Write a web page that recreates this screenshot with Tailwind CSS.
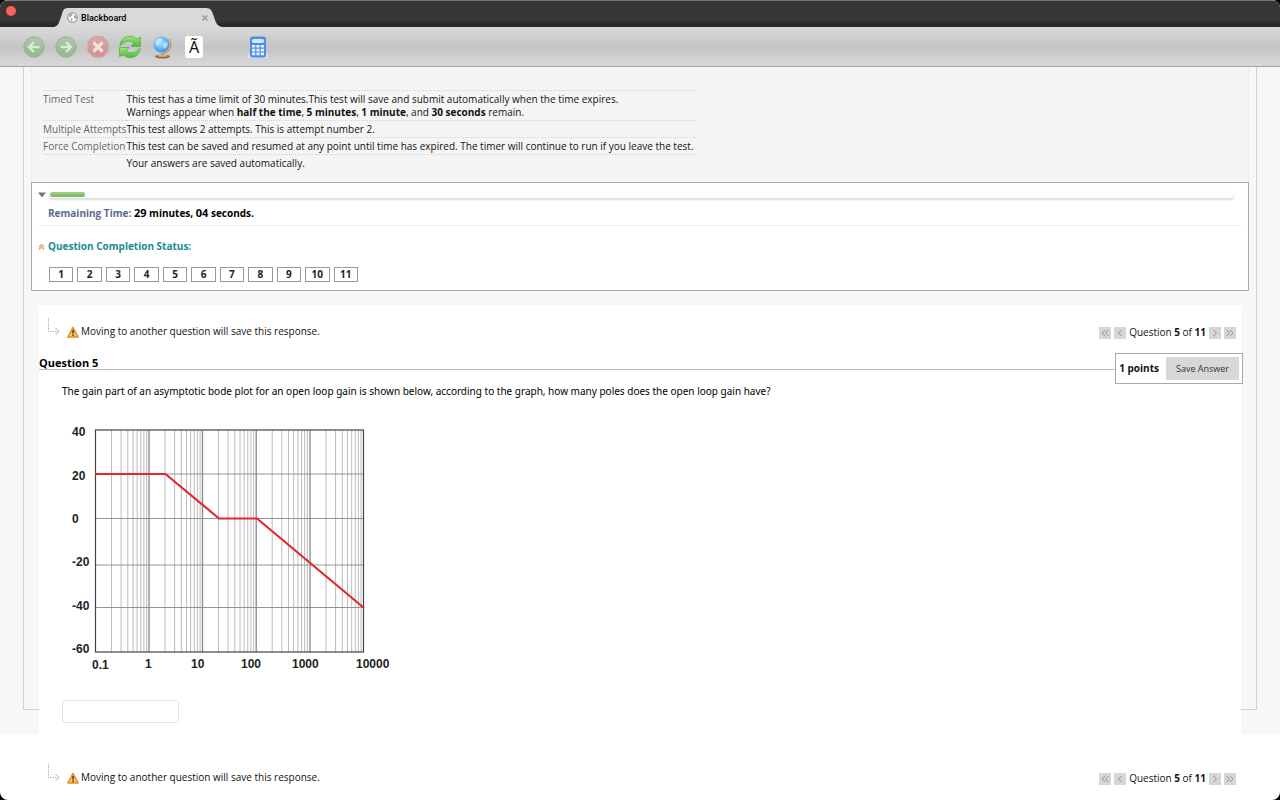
<!DOCTYPE html>
<html lang="en">
<head>
<meta charset="utf-8">
<meta name="viewport" content="width=device-width, initial-scale=1">
<title>Blackboard</title>
<script src="https://cdn.jsdelivr.net/npm/@tailwindcss/browser@4"></script>
</head>
<body class="bg-black font-['Open_Sans','Noto_Sans',sans-serif] text-[10px] leading-[13px] text-[#111]">
<svg class="absolute size-0" aria-hidden="true">
  <defs>
    <linearGradient id="gGreen" x1="0" y1="0" x2="0" y2="1"><stop offset="0" stop-color="#a9c7a3"/><stop offset="1" stop-color="#82b679"/></linearGradient>
    <linearGradient id="gRed" x1="0" y1="0" x2="0" y2="1"><stop offset="0" stop-color="#dda09f"/><stop offset="1" stop-color="#dc7f7f"/></linearGradient>
    <linearGradient id="gLeaf" x1="0" y1="0" x2="0" y2="1"><stop offset="0" stop-color="#9be878"/><stop offset="1" stop-color="#4fb83a"/></linearGradient>
    <linearGradient id="gWarn" x1="0" y1="0" x2="0" y2="1"><stop offset="0" stop-color="#f8a53c"/><stop offset="1" stop-color="#fbd061"/></linearGradient>
    <radialGradient id="gGlobe" cx=".4" cy=".35" r=".7"><stop offset="0" stop-color="#bfe4ff"/><stop offset=".6" stop-color="#62b2f5"/><stop offset="1" stop-color="#3a8de0"/></radialGradient>
  </defs>
  <symbol id="branch" viewBox="0 0 13 18"><path d="M1.500 0V13.500H11" fill="none" stroke="#b5b5b5" stroke-dasharray="1.500 1"/><path d="M8.500 10l3.500 3.500-3.500 3.500" fill="none" stroke="#b5b5b5"/></symbol>
  <symbol id="warn" viewBox="0 0 12 12"><path d="M6 1.200L11.200 11H.8z" fill="url(#gWarn)" stroke="#e58a2e" stroke-width="1.300" stroke-linejoin="round"/><path d="M6 4v3.600M6 8.600v1.400" stroke="#333" stroke-width="1.400"/></symbol>
</svg>
<div class="flex min-h-screen flex-col overflow-hidden rounded-[8px] bg-white">
  <header>
    <div class="flex h-[27px] items-end border-t border-[#777] bg-linear-to-b from-[#373535] from-75% to-[#2a2828] to-90%">
      <div class="flex h-full w-[54px] shrink-0 items-start pt-[5px] pl-[6px]">
        <button type="button" aria-label="Close window" class="size-[10px] rounded-full bg-[#f9605a]"></button>
      </div>
      <div class="relative h-[19px] w-[168px] shrink-0">
        <svg class="absolute inset-0" width="168" height="19" viewBox="0 0 168 19" aria-hidden="true"><path d="M0 19C4 18 5 15 7 9C9 3 9 0 14 0H152C157 0 158 3 160 9C162 15 163 18 168 19z" fill="#d9d9d9"/></svg>
        <div class="relative flex h-full items-center gap-[3px] pr-[13px] pl-[13px]">
          <svg width="11" height="11" viewBox="0 0 11 11" aria-hidden="true"><circle cx="5.500" cy="5.500" r="4.800" fill="#fff" stroke="#777" stroke-width=".9"/><path d="M2.500 2.500l2.500-.8 1 1-1.600 1.100-.6 1.200-1.400.4zM3.500 6l2 .8-.4 2.200-1-.6zM7 3l2 .8.500 2-1.500 1.500-.8-2z" fill="#999"/></svg>
          <span class="flex-1 pt-px font-['Roboto',sans-serif] text-[9px] font-medium text-black">Blackboard</span>
          <button type="button" aria-label="Close tab" class="size-[8px]"><svg width="8" height="8" viewBox="0 0 8 8"><path d="M1.500 1.500l5 5M6.500 1.500l-5 5" stroke="#9c9c9c" stroke-width="1.500"/></svg></button>
        </div>
      </div>
    </div>
    <nav class="flex h-[40px] items-center gap-[8px] border-b border-[#a3a3a3] bg-linear-to-b from-[#dadada] via-[#c5c5c5] to-[#d8d8d8] pl-[22px]" aria-label="Toolbar">
      <button type="button" aria-label="Back" class="opacity-80"><svg width="24" height="24" viewBox="0 0 24 24"><circle cx="12" cy="12" r="10.200" fill="url(#gGreen)" stroke="#8fac8a"/><path d="M17.500 12H7.500M12 7l-5 5 5 5" fill="none" stroke="#e6ece4" stroke-width="2.400"/></svg></button>
      <button type="button" aria-label="Forward" class="opacity-80"><svg width="24" height="24" viewBox="0 0 24 24"><circle cx="12" cy="12" r="10.200" fill="url(#gGreen)" stroke="#8fac8a"/><path d="M6.500 12h10M12 7l5 5-5 5" fill="none" stroke="#e6ece4" stroke-width="2.400"/></svg></button>
      <button type="button" aria-label="Stop" class="opacity-80"><svg width="24" height="24" viewBox="0 0 24 24"><path d="M7.500 1.500h9l5.500 5.500v9.500l-5.500 5.500h-9L2 16.500V7z" fill="url(#gRed)" stroke="#c99" stroke-linejoin="round"/><path d="M7.500 7.500l9 9M16.500 7.500l-9 9" stroke="#f4eded" stroke-width="3.200"/></svg></button>
      <button type="button" aria-label="Reload"><svg width="24" height="24" viewBox="0 0 24 24"><path d="M2 11C2 4 8 .8 13 1.500c2.500.3 4 1.300 5.200 2.600L22.500 2.500V11.500H13l3-3.500C12 4.500 6 6 2 11z" fill="url(#gLeaf)" stroke="#5ab04a" stroke-width=".8"/><path d="M22 13c0 7-6 10.200-11 9.500-2.500-.3-4-1.300-5.200-2.600L1.500 21.500V12.500H11l-3 3.500c4 3.500 10 2 14-3z" fill="url(#gLeaf)" stroke="#5ab04a" stroke-width=".8"/></svg></button>
      <button type="button" aria-label="Open in browser"><svg width="24" height="24" viewBox="0 0 24 24"><ellipse cx="12.500" cy="21.500" rx="7.500" ry="2" fill="#9a6a3c"/><ellipse cx="12.500" cy="20.800" rx="5" ry="1" fill="#d8b384"/><path d="M19 4c4 6 1 14-7 14.500v2" fill="none" stroke="#c79a62" stroke-width="1.400"/><circle cx="11.500" cy="9.500" r="8" fill="url(#gGlobe)"/><path d="M6 5l4-2 2 2-3 3-1 3-3-2zM13 8l4-1 1 3-3 4-2-2z" fill="#d6efff" opacity=".65"/></svg></button>
      <button type="button" aria-label="Special characters" class="flex size-[24px] items-center justify-center"><span class="flex h-[22px] w-[18px] items-center justify-center rounded-[3px] bg-white font-['Noto_Sans',sans-serif] text-[16px] leading-[20px] text-[#111]">Ã</span></button>
      <button type="button" aria-label="Calculator" class="ml-[32px]"><svg width="24" height="24" viewBox="0 0 24 24"><rect x="2" y="19" width="20" height="4" rx="2" fill="#e6e6e6"/><rect x="4" y="1.500" width="16" height="21" rx="2.500" fill="#4a8fe7"/><rect x="6" y="4" width="12" height="4" rx="1.500" fill="#d9e7fb"/><path d="M6 10h3.200v2.600H6zM10.400 10h3.200v2.600h-3.200zM14.800 10H18v2.600h-3.200zM6 13.800h3.200v2.600H6zM10.400 13.800h3.200v2.600h-3.200zM14.800 13.800H18v2.600h-3.200zM6 17.600h3.200v2.600H6zM10.400 17.600h3.200v2.600h-3.200zM14.800 17.600H18v2.600h-3.200z" fill="#e9f1fd"/></svg></button>
    </nav>
  </header>

  <main class="bg-[#f7f7f7] px-[23px] pb-[24px]">
    <div class="border-x border-b border-[#d2d2d2] px-[7px]">
      <section class="border-x border-[#ebebeb] bg-[#f5f5f5] px-[11px] pt-[23px] pb-[11px]" aria-label="Test information">
        <table class="border-collapse text-left align-top">
          <tbody>
            <tr class="border-t border-dotted border-[#d4d4d4]"><th scope="row" class="w-[83px] pt-[2px] align-top font-normal whitespace-nowrap text-[#666]">Timed Test</th><td class="pt-[2px] pr-[2px] pb-[1px]">This test has a time limit of 30 minutes.This test will save and submit automatically when the time expires.<br>Warnings appear when <b>half the time</b>, <b>5 minutes</b>, <b>1 minute</b>, and <b>30 seconds</b> remain.</td></tr>
            <tr class="border-t border-dotted border-[#d4d4d4]"><th scope="row" class="pt-[2px] pb-[1px] font-normal whitespace-nowrap text-[#666]">Multiple Attempts</th><td class="pt-[2px] pb-[1px]">This test allows 2 attempts. This is attempt number 2.</td></tr>
            <tr class="border-t border-dotted border-[#d4d4d4]"><th scope="row" class="pt-[2px] pb-[1px] font-normal whitespace-nowrap text-[#666]">Force Completion</th><td class="pt-[2px] pr-[2px] pb-[1px]">This test can be saved and resumed at any point until time has expired. The timer will continue to run if you leave the test.</td></tr>
            <tr class="border-t border-dotted border-[#d4d4d4]"><td></td><td class="pt-[2px] pb-[1px]">Your answers are saved automatically.</td></tr>
          </tbody>
        </table>
      </section>

      <section class="border border-[#aaa] bg-white px-[6px] pb-[8px]" aria-label="Test status">
        <div class="flex items-center gap-[3px] pt-[8px] pr-[8px]">
          <button type="button" aria-label="Collapse timer"><svg width="8" height="6" viewBox="0 0 8 6"><path d="M0 .5h8L4 5.500z" fill="#777"/></svg></button>
          <div class="h-[7px] flex-1 rounded-full bg-[#fcfcfc] pt-px pl-px shadow-[0_2px_2px_#ddd]"><div class="h-[5px] w-[35px] rounded-[2px] bg-linear-to-b from-[#a3d08a] to-[#74b557]"></div></div>
        </div>
        <div class="mt-[7px] border-b border-[#eee] pb-[4px] pl-[10px] leading-[15px] font-bold text-black"><span class="text-[#5a6b8c]">Remaining Time:</span> <span class="text-[11px]">29</span> minutes, <span class="text-[11px]">04</span> seconds.</div>
        <div class="mt-[14px] flex items-center gap-[3px] font-bold">
          <svg width="7" height="7" viewBox="0 0 7 7" aria-hidden="true"><path d="M1 4l2.500-2.500L6 4M1 6.500L3.500 4 6 6.500" fill="none" stroke="#dba94e" stroke-width="1.200"/></svg>
          <a href="#questions" class="text-[#218a96]">Question Completion Status:</a>
        </div>
        <div id="questions" class="mt-[14px] ml-[11px] grid w-[309px] grid-cols-11 gap-[4px] text-center leading-[13px] font-bold text-[#222]">
          <a href="#q1" class="border border-[#999]">1</a><a href="#q2" class="border border-[#999]">2</a><a href="#q3" class="border border-[#999]">3</a><a href="#q4" class="border border-[#999]">4</a><a href="#q5" class="border border-[#999]">5</a><a href="#q6" class="border border-[#999]">6</a><a href="#q7" class="border border-[#999]">7</a><a href="#q8" class="border border-[#999]">8</a><a href="#q9" class="border border-[#999]">9</a><a href="#q10" class="border border-[#999]">10</a><a href="#q11" class="border border-[#999]">11</a>
        </div>
      </section>

      <section id="q5" class="mx-[8px] mt-[14px] -mb-[25px] bg-white pt-[13px] pb-[11px]">
        <div class="flex items-start pr-[5px] pl-[8px]">
          <svg class="mr-[7px]" width="13" height="18" aria-hidden="true"><use href="#branch"/></svg>
          <svg class="mt-[8px] mr-[2px]" width="12" height="12" aria-hidden="true"><use href="#warn"/></svg>
          <p class="mt-[7px]">Moving to another question will save this response.</p>
          <div class="mt-[8px] ml-auto flex items-center gap-[3px]">
            <button type="button" aria-label="First question" class="flex size-[12px] items-center justify-center bg-[#d6d6d6]"><svg width="8" height="8" viewBox="0 0 8 8"><path d="M4 1L1 4l3 3M7.500 1l-3 3 3 3" fill="none" stroke="#929292"/></svg></button>
            <button type="button" aria-label="Previous question" class="flex size-[12px] items-center justify-center bg-[#d6d6d6]"><svg width="8" height="8" viewBox="0 0 8 8"><path d="M5.500 1l-3 3 3 3" fill="none" stroke="#929292"/></svg></button>
            <span>Question <b>5</b> of <b>11</b></span>
            <button type="button" aria-label="Next question" class="flex size-[12px] items-center justify-center bg-[#d6d6d6]"><svg width="8" height="8" viewBox="0 0 8 8"><path d="M2.500 1l3 3-3 3" fill="none" stroke="#929292"/></svg></button>
            <button type="button" aria-label="Last question" class="flex size-[12px] items-center justify-center bg-[#d6d6d6]"><svg width="8" height="8" viewBox="0 0 8 8"><path d="M.5 1l3 3-3 3M4 1l3 3-3 3" fill="none" stroke="#929292"/></svg></button>
          </div>
        </div>
        <div class="-mr-[2px] mt-[14px] flex items-start">
          <h2 class="flex-1 border-b border-[#bbb] pt-[3px] text-[11px] leading-[13px] font-bold text-black">Question 5</h2>
          <div class="flex items-center gap-[7px] border border-[#aaa] bg-white p-[3px]">
            <b>1 points</b>
            <button type="button" class="h-[23px] w-[73px] bg-[#d8d8d8] text-[9px] text-[#333]">Save Answer</button>
          </div>
        </div>
        <div class="px-[23px] pt-px">
          <label for="answer" class="block font-['Noto_Sans',sans-serif] text-black">The gain part of an asymptotic bode plot for an open loop gain is shown below, according to the graph, how many poles does the open loop gain have?</label>
          <svg class="mt-[23px] font-['Liberation_Sans',Arial,sans-serif] text-[12px] font-bold" width="340" height="260" viewBox="0 0 340 260" role="img" aria-label="Asymptotic Bode gain plot">
            <defs><path id="decade" d="M16 0v222M25.600 0v222M32.300 0v222M37.500 0v222M41.700 0v222M45.300 0v222M48.400 0v222M51.100 0v222"/></defs>
            <g stroke="#b4b4b4" stroke-width=".9">
              <use href="#decade" x="33.500" y="9"/><use href="#decade" x="87" y="9"/><use href="#decade" x="140.500" y="9"/><use href="#decade" x="194.200" y="9"/><use href="#decade" x="248" y="9"/>
            </g>
            <path d="M87 9v222M140.500 9v222M194.200 9v222M248 9v222" stroke="#888" stroke-width="1.300"/>
            <path d="M33.500 53h268M33.500 97.500h268M33.500 144h268M33.500 186.500h268" stroke="#888" stroke-width=".9"/>
            <rect x="33.500" y="9" width="268" height="222" fill="none" stroke="#444" stroke-width="1.200"/>
            <path d="M33 53H103.500L157 97.500H195L302 187" fill="none" stroke="#e02a2e" stroke-width="2.200"/>
            <g fill="#222">
              <text x="10" y="15">40</text><text x="10" y="59">20</text><text x="10" y="102">0</text><text x="10" y="145">-20</text><text x="10" y="189">-40</text><text x="10" y="232">-60</text>
              <text x="30" y="248">0.1</text><text x="83" y="247">1</text><text x="129" y="247">10</text><text x="179" y="247">100</text><text x="230" y="247">1000</text><text x="294" y="247">10000</text>
            </g>
          </svg>
          <input id="answer" type="text" class="mt-[19px] block h-[23px] w-[117px] rounded-[3px] border border-[#e2e2e2] bg-white px-[4px]">
        </div>
      </section>
    </div>
  </main>

  <footer class="flex items-start bg-white pt-[30px] pr-[44px] pl-[47px]">
    <svg class="mr-[7px]" width="13" height="18" aria-hidden="true"><use href="#branch"/></svg>
    <svg class="mt-[8px] mr-[2px]" width="12" height="12" aria-hidden="true"><use href="#warn"/></svg>
    <p class="mt-[7px]">Moving to another question will save this response.</p>
    <div class="mt-[8px] ml-auto flex items-center gap-[3px]">
      <button type="button" aria-label="First question" class="flex size-[12px] items-center justify-center bg-[#d6d6d6]"><svg width="8" height="8" viewBox="0 0 8 8"><path d="M4 1L1 4l3 3M7.500 1l-3 3 3 3" fill="none" stroke="#929292"/></svg></button>
      <button type="button" aria-label="Previous question" class="flex size-[12px] items-center justify-center bg-[#d6d6d6]"><svg width="8" height="8" viewBox="0 0 8 8"><path d="M5.500 1l-3 3 3 3" fill="none" stroke="#929292"/></svg></button>
      <span>Question <b>5</b> of <b>11</b></span>
      <button type="button" aria-label="Next question" class="flex size-[12px] items-center justify-center bg-[#d6d6d6]"><svg width="8" height="8" viewBox="0 0 8 8"><path d="M2.500 1l3 3-3 3" fill="none" stroke="#929292"/></svg></button>
      <button type="button" aria-label="Last question" class="flex size-[12px] items-center justify-center bg-[#d6d6d6]"><svg width="8" height="8" viewBox="0 0 8 8"><path d="M.5 1l3 3-3 3M4 1l3 3-3 3" fill="none" stroke="#929292"/></svg></button>
    </div>
  </footer>
</div>
</body>
</html>
